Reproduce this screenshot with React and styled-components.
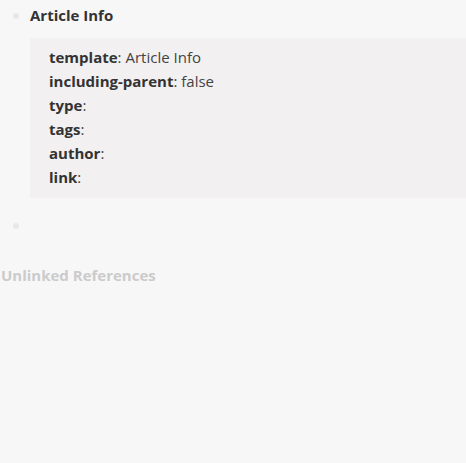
import styled, { createGlobalStyle } from 'styled-components';

const GlobalStyle = createGlobalStyle`
  html, body {
    margin: 0;
    background: #f8f7f7;
  }
  body {
    font-family: "Open Sans", "Noto Sans", sans-serif;
    color: #333;
  }
`;

const Page = styled.div`
  width: 466px;
  height: 463px;
  overflow: hidden;
  display: flex;
  flex-direction: column;
`;

const Block = styled.div`
  display: flex;
  align-items: flex-start;
  height: ${(p) => p.height || 'auto'};
`;

const BulletCol = styled.div`
  width: 30px;
  flex: none;
  display: flex;
  justify-content: center;
  padding-top: ${(p) => p.top || '13px'};
  box-sizing: border-box;
`;

const Bullet = styled.span`
  width: 6px;
  height: 6px;
  border-radius: 50%;
  background: #e8e8e8;
  margin-left: 1px;
`;

const Content = styled.div`
  flex: 1;
  min-width: 0;
`;

const Title = styled.div`
  font-weight: 700;
  font-size: 15px;
  line-height: 20px;
  padding-top: 5px;
  color: #333;
`;

const Props = styled.div`
  margin-top: 13px;
  background: #f2f0f0;
  padding: 7px 0 9px 19px;
`;

const Row = styled.div`
  font-size: 15px;
  line-height: 24px;
  color: #444;
  b {
    font-weight: 700;
    color: #333;
  }
`;

const Unlinked = styled.div`
  margin-top: 31px;
  padding-left: 1px;
  font-weight: 700;
  font-size: 15px;
  color: #cbcbcb;
`;

const props = [
  ['template', 'Article Info'],
  ['including-parent', 'false'],
  ['type', ''],
  ['tags', ''],
  ['author', ''],
  ['link', ''],
];

export default function App() {
  return (
    <Page>
      <GlobalStyle />
      <Block>
        <BulletCol>
          <Bullet />
        </BulletCol>
        <Content>
          <Title>Article Info</Title>
          <Props>
            {props.map(([k, v]) => (
              <Row key={k}>
                <b>{k}</b>: {v}
              </Row>
            ))}
          </Props>
        </Content>
      </Block>
      <Block height="36px">
        <BulletCol top="25px">
          <Bullet />
        </BulletCol>
      </Block>
      <Unlinked>Unlinked References</Unlinked>
    </Page>
  );
}
